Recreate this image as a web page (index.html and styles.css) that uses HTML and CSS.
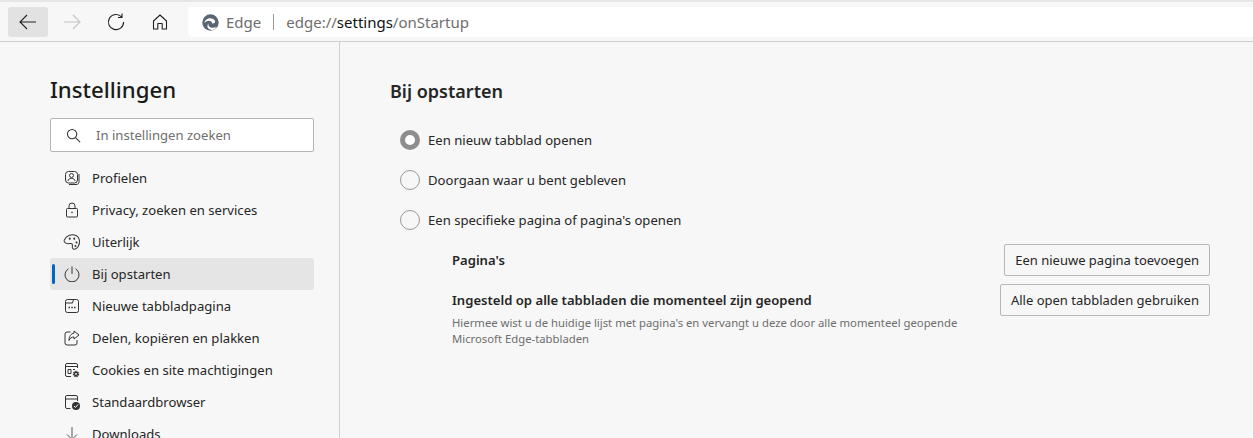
FILE: index.html
```html
<!DOCTYPE html>
<html lang="nl">
    <head>
        <meta charset="utf-8">
        <title>Instellingen</title>
        <link rel="stylesheet" href="styles.css">
    </head>
    <body>
        <div class="toolbar">
            <div class="nav-btn nav-back">
                <svg width="20" height="20" viewBox="0 0 20 20" fill="none" stroke="#222" stroke-width="1.1"><path d="M2 10h16M9 3l-7 7 7 7"/></svg>
            </div>
            <div class="nav-btn">
                <svg width="20" height="20" viewBox="0 0 20 20" fill="none" stroke="#c4c4c4" stroke-width="1.1"><path d="M2 10h15M11 3l7 7-7 7"/></svg>
            </div>
            <div class="nav-btn">
                <svg width="20" height="20" viewBox="0 0 20 20" fill="none" stroke="#222" stroke-width="1.1"><path d="M15.5 4.8A7.6 7.6 0 1 0 17.6 10M16 1.5v4h-4"/></svg>
            </div>
            <div class="nav-btn">
                <svg width="18" height="18" viewBox="0 0 18 18" fill="none" stroke="#222" stroke-width="1.1"><path d="M9 2L2.5 8v8h4.3v-5.5h4.4V16h4.3V8z" stroke-linejoin="round"/></svg>
            </div>
            <div class="address">
                <svg class="edge-logo" width="17" height="17" viewBox="0 0 17 17">
                    <circle cx="8.5" cy="8.5" r="8.2" fill="#5a6673"/>
                    <path d="M2.500 9C3 4 11 2.500 13 7c.5 1.500-.8 2.800-3 2.500 .3-3-4.500-4-7.500-.5z" fill="#fff"/>
                    <path d="M6.500 9.500c-.8 3.500 3 5.500 8.500 3.500-2 3-5 3.300-7 2.500C5 14.500 4.800 11 6.500 9.500z" fill="#fff"/>
                </svg>
                <span class="edge-name">Edge</span>
                <span class="address-sep"></span>
                <span class="url">edge://<b>settings</b>/onStartup</span>
            </div>
        </div>

        <div class="page">
            <div class="sidebar">
                <h1>Instellingen</h1>
                <div class="search">
                    <svg width="15" height="15" viewBox="0 0 16 16" fill="none" stroke="#333" stroke-width="1.1"><circle cx="6.500" cy="6.500" r="5"/><path d="M10.200 10.200L15 15"/></svg>
                    <span>In instellingen zoeken</span>
                </div>
                <ul class="menu">
                    <li>
                        <svg width="16" height="16" viewBox="0 0 16 16" fill="none" stroke="#333"><rect x="1.500" y="1.500" width="12" height="11.500" rx="3"/><circle cx="7.500" cy="5.500" r="2"/><path d="M4 11c0-3.500 7-3.500 7 0M15 4v7.500c0 2-1 3-3 3H5"/></svg>
                        Profielen
                    </li>
                    <li>
                        <svg width="16" height="16" viewBox="0 0 16 16" fill="none" stroke="#333"><rect x="2.500" y="6.500" width="11" height="8.500" rx="1"/><path d="M5 6.500V4a3 3 0 0 1 6 0v2.500"/><circle cx="8" cy="10.500" r=".8" fill="#333" stroke="none"/></svg>
                        Privacy, zoeken en services
                    </li>
                    <li>
                        <svg class="icon-wide" width="18" height="18" viewBox="0 0 16 16" fill="none" stroke="#333" stroke-width=".9"><path d="M1 6.500C3 2 8 .5 12 2.500c3 1.500 3.500 6 1.500 9.500-1.500 2.500-4 3-5 1.500-.8-1.300.5-2.500-.5-3.800C7 8.500 4.500 10.500 2.500 9 1.500 8.400.7 7.500 1 6.500z"/><circle cx="6" cy="5" r=".9" fill="#333" stroke="none"/><circle cx="10" cy="5" r=".9" fill="#333" stroke="none"/><circle cx="12" cy="8.500" r=".9" fill="#333" stroke="none"/><circle cx="11" cy="11.500" r=".9" fill="#333" stroke="none"/></svg>
                        Uiterlijk
                    </li>
                    <li class="active">
                        <svg width="16" height="16" viewBox="0 0 16 16" fill="none" stroke="#333"><path d="M8 .5v7.500M4.500 2.800a7 7 0 1 0 7 0"/></svg>
                        Bij opstarten
                    </li>
                    <li>
                        <svg width="16" height="16" viewBox="0 0 16 16" fill="none" stroke="#333"><rect x="1.500" y="1.500" width="13" height="13" rx="2"/><path d="M1.500 5h7l1-3.500"/><path d="M4.500 9.500h1.500M7.300 9.500h1.500M10 9.500h1.500" stroke-width="1.500"/></svg>
                        Nieuwe tabbladpagina
                    </li>
                    <li>
                        <svg width="16" height="16" viewBox="0 0 16 16" fill="none" stroke="#333"><path d="M6.500 2H3a2 2 0 0 0-2 2v9a2 2 0 0 0 2 2h8a2 2 0 0 0 2-2v-3"/><path d="M10 1l5 4-5 4V7C7.500 7 6 8 5 10.500 5 6.500 7 3.500 10 3.200z"/></svg>
                        Delen, kopiëren en plakken
                    </li>
                    <li>
                        <svg width="16" height="16" viewBox="0 0 16 16" fill="none" stroke="#333"><path d="M7 14.500H3a1.500 1.500 0 0 1-1.500-1.500V3A1.500 1.500 0 0 1 3 1.500h9A1.500 1.500 0 0 1 13.500 3v3"/><path d="M1.500 4.500h12M4 7.500h3v4H4zM9 7.500h2"/><circle cx="12" cy="12" r="2.400" fill="none" stroke-width="1.600" stroke-dasharray="1.300 .6"/><circle cx="12" cy="12" r="2.200" fill="#333" stroke="none"/><circle cx="12" cy="12" r=".9" fill="#f7f7f7" stroke="none"/></svg>
                        Cookies en site machtigingen
                    </li>
                    <li>
                        <svg width="16" height="16" viewBox="0 0 16 16" fill="none" stroke="#333"><path d="M6.500 14.500H3A1.500 1.500 0 0 1 1.500 13V3A1.500 1.500 0 0 1 3 1.500h9A1.500 1.500 0 0 1 13.500 3v4M1.500 5h12"/><circle cx="12" cy="12" r="4" fill="#333" stroke="none"/><path d="M10 12l1.500 1.500 2.500-3" stroke="#fff"/></svg>
                        Standaardbrowser
                    </li>
                    <li>
                        <svg width="16" height="16" viewBox="0 0 16 16" fill="none" stroke="#555"><path d="M8 1v12M3 8.500L8 13.500l5-5"/></svg>
                        Downloads
                    </li>
                </ul>
            </div>

            <div class="content">
                <h2>Bij opstarten</h2>
                <div class="radio-row"><span class="radio checked"></span>Een nieuw tabblad openen</div>
                <div class="radio-row"><span class="radio"></span>Doorgaan waar u bent gebleven</div>
                <div class="radio-row"><span class="radio"></span>Een specifieke pagina of pagina's openen</div>

                <div class="pages-row">
                    <span class="row-title">Pagina's</span>
                    <button class="btn">Een nieuwe pagina toevoegen</button>
                </div>
                <div class="pages-row tabs-row">
                    <div class="row-text">
                        <div class="row-title">Ingesteld op alle tabbladen die momenteel zijn geopend</div>
                        <div class="row-sub">Hiermee wist u de huidige lijst met pagina's en vervangt u deze door alle momenteel geopende Microsoft Edge-tabbladen</div>
                    </div>
                    <button class="btn">Alle open tabbladen gebruiken</button>
                </div>
            </div>
        </div>
    </body>
</html>
```

FILE: styles.css
```css
html, body{
    margin: 0;
    padding: 0;
    height: 438px;
    overflow: hidden;
}

body{
    background: #f7f7f7;
    color: #262626;
    font-family: "Noto Sans", "Open Sans", sans-serif;
    font-size: 13.1px;
}

.toolbar{
    display: flex;
    align-items: center;
    height: 38px;
    padding: 3px 0 0 8px;
    border-bottom: 1px solid #cfcfcf;
    box-shadow: inset 0 2px 0 #e6e6e6;
    background: #f7f7f7;
}

.nav-btn{
    display: flex;
    align-items: center;
    justify-content: center;
    width: 40px;
    height: 30px;
    margin-right: 4px;
    border-radius: 3px;
}

.nav-back{
    background: #e2e2e2;
}

.address{
    display: flex;
    align-items: center;
    flex: 1;
    height: 30px;
    margin-left: 4px;
    padding-left: 14px;
    background: #fff;
    border-radius: 4px 0 0 4px;
    color: #6e6e6e;
    font-size: 15px;
}

.edge-name{
    margin-left: 7px;
}

.address-sep{
    width: 1px;
    height: 16px;
    margin: 0 12px;
    background: #9a9a9a;
}

.url b{
    font-weight: normal;
    color: #111;
}

.page{
    display: flex;
    height: 396px;
}

.sidebar{
    width: 339px;
    flex: none;
    border-right: 1px solid #cfcfcf;
    padding-top: 31px;
    overflow: hidden;
}

h1{
    margin: 0 0 11px 50px;
    font-size: 22.2px;
    font-weight: 500;
    line-height: 34px;
    color: #1a1a1a;
}

.search{
    display: flex;
    align-items: center;
    box-sizing: border-box;
    width: 264px;
    height: 34px;
    margin-left: 50px;
    padding-left: 15px;
    background: #fff;
    border: 1px solid #b5b5b5;
    border-radius: 2px;
    color: #6f6f6f;
}

.search span{
    margin-left: 15px;
}

ul{
    list-style: none;
    margin: 10px 0 0 50px;
    padding: 0;
    width: 264px;
}

li{
    display: flex;
    align-items: center;
    height: 32px;
    padding-left: 14px;
    border-radius: 2px;
}

li svg{
    flex: none;
    margin-right: 12px;
}

li svg.icon-wide{
    margin-left: -1px;
    margin-right: 11px;
}

li.active{
    position: relative;
    background: #e5e5e5;
}

li.active::before{
    content: "";
    position: absolute;
    left: 2px;
    top: 6px;
    width: 3px;
    height: 20px;
    border-radius: 2px;
    background: #0067c0;
}

.content{
    flex: 1;
    padding: 32px 43px 0 50px;
}

h2{
    margin: 0 0 12px 0;
    font-size: 18px;
    font-weight: 600;
    line-height: 34px;
}

.radio-row{
    display: flex;
    align-items: center;
    height: 40px;
    margin-left: 10px;
}

.radio{
    box-sizing: border-box;
    width: 20px;
    height: 20px;
    margin-right: 8px;
    border: 1px solid #999;
    border-radius: 50%;
}

.radio.checked{
    border: 5px solid #8e8e8e;
    background: #fff;
}

.pages-row{
    display: flex;
    align-items: center;
    justify-content: space-between;
    height: 40px;
    margin-left: 62px;
}

.tabs-row{
    align-items: flex-start;
    height: auto;
    margin-top: 4px;
}

.row-title{
    font-weight: 600;
}

.tabs-row .row-text{
    width: 520px;
    padding-top: 7px;
}

.row-sub{
    margin-top: 6px;
    font-size: 11.3px;
    line-height: 16px;
    color: #6e6e6e;
}

.btn{
    height: 32px;
    padding: 0 10px;
    background: #f7f7f7;
    border: 1px solid #b5b5b5;
    border-radius: 2px;
    color: #262626;
    font-family: inherit;
    font-size: 13px;
}
```
